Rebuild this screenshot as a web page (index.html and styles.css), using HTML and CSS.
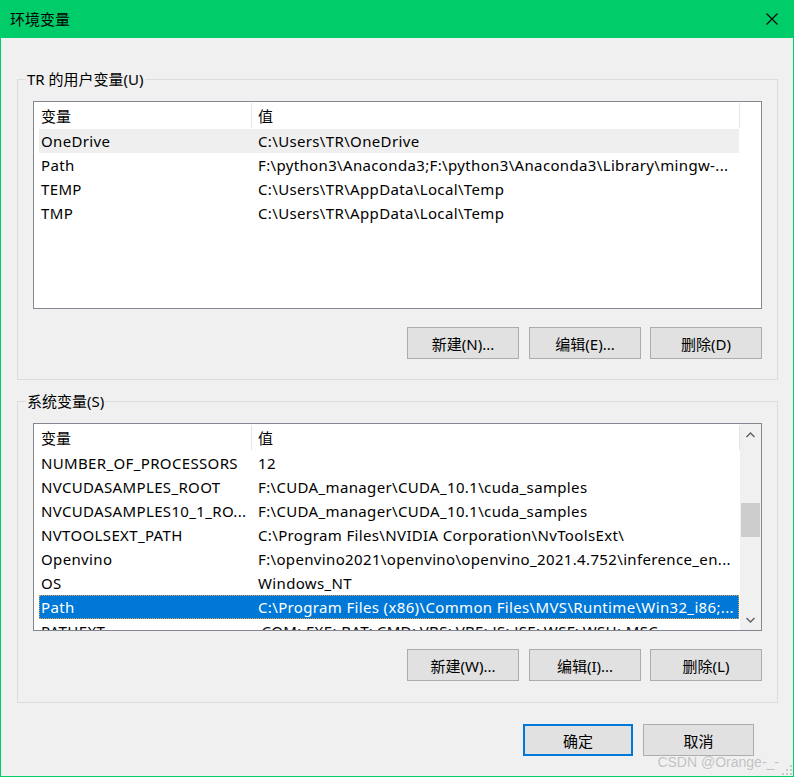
FILE: index.html
```html
<!DOCTYPE html>
<html lang="zh">
<head>
<meta charset="utf-8">
<title>环境变量</title>
<link rel="stylesheet" href="styles.css">
</head>
<body>
<div class="window">
  <div class="titlebar">
    <span class="title">环境变量</span>
    <svg class="close" width="12" height="12" viewBox="0 0 12 12"><path d="M0.5 0.5 L11.5 11.5 M11.5 0.5 L0.5 11.5" stroke="#000" stroke-width="1.1" fill="none"/></svg>
  </div>
  <div class="content">
    <fieldset class="group g1">
      <legend>TR 的用户变量(U)</legend>
      <div class="list">
        <div class="lv-main">
          <div class="lv-head">
            <div class="hc hc1">变量</div>
            <div class="hc hc2">值</div>
          </div>
          <div class="rows">
            <div class="row hover"><span>OneDrive</span><span>C:\Users\TR\OneDrive</span></div>
            <div class="row"><span>Path</span><span>F:\python3\Anaconda3;F:\python3\Anaconda3\Library\mingw-...</span></div>
            <div class="row"><span>TEMP</span><span>C:\Users\TR\AppData\Local\Temp</span></div>
            <div class="row"><span>TMP</span><span>C:\Users\TR\AppData\Local\Temp</span></div>
          </div>
        </div>
      </div>
      <div class="btnrow">
        <button class="btn">新建(N)...</button>
        <button class="btn">编辑(E)...</button>
        <button class="btn last">删除(D)</button>
      </div>
    </fieldset>

    <fieldset class="group g2">
      <legend>系统变量(S)</legend>
      <div class="list">
        <div class="lv-main">
          <div class="lv-head">
            <div class="hc hc1">变量</div>
            <div class="hc hc2">值</div>
          </div>
          <div class="rows">
            <div class="row"><span>NUMBER_OF_PROCESSORS</span><span>12</span></div>
            <div class="row"><span>NVCUDASAMPLES_ROOT</span><span>F:\CUDA_manager\CUDA_10.1\cuda_samples</span></div>
            <div class="row"><span>NVCUDASAMPLES10_1_RO...</span><span>F:\CUDA_manager\CUDA_10.1\cuda_samples</span></div>
            <div class="row"><span>NVTOOLSEXT_PATH</span><span>C:\Program Files\NVIDIA Corporation\NvToolsExt\</span></div>
            <div class="row"><span>Openvino</span><span>F:\openvino2021\openvino\openvino_2021.4.752\inference_en...</span></div>
            <div class="row"><span>OS</span><span>Windows_NT</span></div>
            <div class="row selected"><span>Path</span><span>C:\Program Files (x86)\Common Files\MVS\Runtime\Win32_i86;...</span></div>
            <div class="row"><span>PATHEXT</span><span>.COM;.EXE;.BAT;.CMD;.VBS;.VBE;.JS;.JSE;.WSF;.WSH;.MSC</span></div>
          </div>
        </div>
        <div class="scrollbar">
          <div class="sb-btn">
            <svg width="9" height="6" viewBox="0 0 9 6"><path d="M0.5 5 L4.5 1 L8.5 5" stroke="#606060" stroke-width="1.4" fill="none"/></svg>
          </div>
          <div class="sb-track"><div class="sb-thumb"></div></div>
          <div class="sb-btn">
            <svg width="9" height="6" viewBox="0 0 9 6"><path d="M0.5 1 L4.5 5 L8.5 1" stroke="#606060" stroke-width="1.4" fill="none"/></svg>
          </div>
        </div>
      </div>
      <div class="btnrow">
        <button class="btn">新建(W)...</button>
        <button class="btn">编辑(I)...</button>
        <button class="btn last">删除(L)</button>
      </div>
    </fieldset>

    <div class="dlgrow">
      <button class="btn dlg default">确定</button>
      <button class="btn dlg cancel">取消</button>
    </div>
  </div>
  <div class="watermark">CSDN @Orange-_-</div>
  <svg class="grip" width="10" height="10" viewBox="0 0 10 10">
    <rect x="8" y="0" width="2" height="2" fill="#c8c8c8"/>
    <rect x="4" y="4" width="2" height="2" fill="#c8c8c8"/>
    <rect x="8" y="4" width="2" height="2" fill="#c8c8c8"/>
    <rect x="0" y="8" width="2" height="2" fill="#c8c8c8"/>
    <rect x="4" y="8" width="2" height="2" fill="#c8c8c8"/>
    <rect x="8" y="8" width="2" height="2" fill="#c8c8c8"/>
  </svg>
</div>
</body>
</html>
```

FILE: styles.css
```css
* { box-sizing: border-box; }
html, body { margin: 0; padding: 0; }
body {
  width: 794px;
  height: 777px;
  font-family: "Noto Sans", "Noto Sans CJK SC", sans-serif;
  font-size: 15px;
  color: #000;
  background: #f0f0f0;
}
.window {
  position: relative;
  width: 794px;
  height: 777px;
  border: 1px solid #00cc6a;
  border-top: none;
  background: #f0f0f0;
  display: flex;
  flex-direction: column;
}
.titlebar {
  height: 38px;
  background: #00cc6a;
  display: flex;
  align-items: center;
  justify-content: space-between;
  padding: 0 15px 1px 9px;
  flex-shrink: 0;
}
.title { font-size: 15px; line-height: 20px; }
.close { display: block; }
.content {
  display: flex;
  flex-direction: column;
  padding: 0 15px 0 16px;
}
.group {
  margin: 0;
  border: 1px solid #dcdcdc;
  padding: 12px 15px 20px 15px;
  min-width: 0;
}
.g1 { margin-top: 31px; }
.g2 { margin-top: 11px; padding-top: 12px; padding-bottom: 21px; }
.group legend {
  margin-left: -7px;
  padding: 0 1px;
  line-height: 20px;
  font-size: 15px;
}
.list {
  height: 208px;
  border: 1px solid #828790;
  background: #fff;
  display: flex;
  overflow: hidden;
}
.lv-main {
  flex: 1;
  min-width: 0;
  overflow: hidden;
}
.lv-head {
  display: flex;
  height: 27px;
}
.hc {
  padding-top: 2px;
  border-right: 1px solid #e5e5e5;
  margin: 1px 0 1px 0;
  line-height: 23px;
}
.hc1 { width: 218px; padding-left: 7px; }
.hc2 { width: 488px; padding-left: 6px; }
.rows { margin-left: 5px; width: 700px; }
.row {
  display: grid;
  grid-template-columns: 217px 1fr;
  height: 24px;
  line-height: 24px;
  white-space: nowrap;
  letter-spacing: 0.35px;
}
.row span { padding-left: 2px; overflow: hidden; }
.row.hover { background: #efefef; }
.row.selected {
  background: #0078d7;
  color: #fff;
  outline: 1px dotted #e0a050;
  outline-offset: -1px;
}
.scrollbar {
  width: 21px;
  flex-shrink: 0;
  background: #f0f0f0;
  display: flex;
  flex-direction: column;
}
.sb-btn {
  height: 21px;
  display: flex;
  align-items: center;
  justify-content: center;
  flex-shrink: 0;
}
.sb-track { flex: 1; padding: 58px 1px 0 1px; }
.sb-thumb { height: 34px; background: #cdcdcd; }
.btnrow {
  display: flex;
  justify-content: flex-end;
  gap: 10px;
  margin-top: 18px;
}
.btn {
  width: 112px;
  height: 32px;
  border: 1px solid #adadad;
  background: #e1e1e1;
  font-family: "Noto Sans", "Noto Sans CJK SC", sans-serif;
  font-size: 15px;
  color: #000;
  padding: 0;
  margin: 0;
}
.btn.last { margin-left: -1px; }
.dlgrow {
  display: flex;
  justify-content: flex-end;
  gap: 10px;
  margin-top: 21px;
  padding-right: 24px;
}
.btn.dlg { width: 110px; }
.btn.dlg.cancel { width: 111px; }
.btn.dlg.default { border: 2px solid #0078d7; }
.watermark {
  position: absolute;
  right: 14px;
  bottom: 6px;
  font-family: "Liberation Sans", Arial, sans-serif;
  font-size: 14px;
  color: #c0c0c0;
  text-shadow: 0 0 1px #fff;
}
.grip {
  position: absolute;
  right: 1px;
  bottom: 1px;
}
```
